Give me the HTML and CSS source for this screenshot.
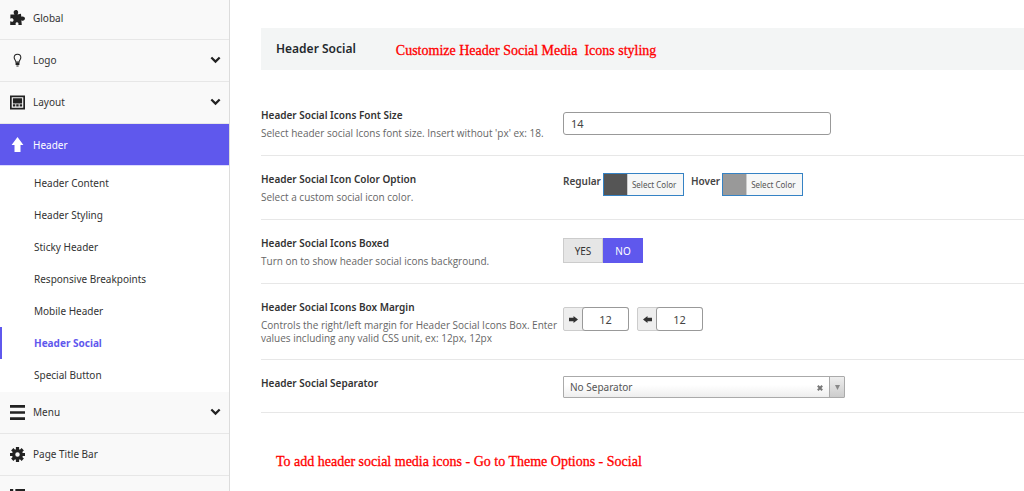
FILE: index.html
```html
<!DOCTYPE html>
<html lang="en">
<head>
<meta charset="utf-8">
<title>Theme Options - Header Social</title>
<link rel="stylesheet" href="styles.css">
</head>
<body>
<div class="app">
  <nav class="sidebar">
    <a class="item" href="#"><svg class="icon" viewBox="0 0 14 14"><path d="M.4 4.200H4.200C2.800 2.400 3.400.1 5.500 0 7.700 0 8.200 2.400 7 4.100L10.200 3.500 10.600 6.300C12 5.500 14 6.400 14 8s-2 2.600-3.400 1.500L11 14H7.800C8.200 12.400 7.800 11.400 6.500 11.400S5 12.600 5.400 14H.2V10.600C2.200 11.500 3.400 10.800 3.300 9.300 3.200 7.900 1.600 7.300.3 8.200Z"/></svg><span>Global</span></a>
    <a class="item" href="#"><svg class="icon" viewBox="0 0 14 14"><path class="line" d="M5.500 8.500C5.500 7 3.900 6 3.900 4.300a3.100 3.100 0 0 1 6.200 0C10.100 6 8.500 7 8.500 8.500Z"/><path d="M5.200 9h3.600v2.200H5.200zM6 11.600h2v1H6z"/></svg><span>Logo</span><svg class="chevron" viewBox="0 0 10 7"><path d="M1.200 1.200 5 5l3.800-3.800"/></svg></a>
    <a class="item" href="#"><svg class="icon" viewBox="0 0 14 14"><path fill-rule="evenodd" d="M0 .5h14v13H0zM1.600 2v10h10.800V2zM2.700 3.100h8.600v4.900H2.700zM2.700 8.600h2.300v2.200H2.700zM5.800 8.600h2.300v2.200H5.800zM9 8.600h2.300v2.200H9z"/></svg><span>Layout</span><svg class="chevron" viewBox="0 0 10 7"><path d="M1.200 1.200 5 5l3.800-3.800"/></svg></a>
    <a class="item active" href="#"><svg class="icon" viewBox="0 0 14 14"><path d="M7 0 12.500 7.500H9.800V14H4.200V7.500H1.500Z"/></svg><span>Header</span></a>
    <div class="submenu">
      <a class="sub" href="#">Header Content</a>
      <a class="sub" href="#">Header Styling</a>
      <a class="sub" href="#">Sticky Header</a>
      <a class="sub" href="#">Responsive Breakpoints</a>
      <a class="sub" href="#">Mobile Header</a>
      <a class="sub current" href="#">Header Social</a>
      <a class="sub" href="#">Special Button</a>
    </div>
    <a class="item" href="#"><svg class="icon" viewBox="0 0 14 14"><path d="M0 0h14v2.500H0zM0 5.750h14v2.500H0zM0 11.500h14V14H0z"/></svg><span>Menu</span><svg class="chevron" viewBox="0 0 10 7"><path d="M1.200 1.200 5 5l3.800-3.800"/></svg></a>
    <a class="item" href="#"><svg class="icon" viewBox="0 0 14 14"><circle class="gear" cx="7" cy="7" r="3.600"/><path class="teeth" d="M7 0v3M7 11v3M0 7h3M11 7h3M2.100 2.100l2 2M9.900 9.900l2 2M2.100 11.900l2-2M9.900 4.100l2-2"/></svg><span>Page Title Bar</span></a>
    <a class="item" href="#" aria-label="More"><svg class="icon" viewBox="0 0 14 14"><path d="M0 0h3v3H0zM5 0h9v3H5zM0 5.500h3v3H0zM5 5.500h9v3H5zM0 11h3v3H0zM5 11h9v3H5z"/></svg></a>
  </nav>

  <main class="main">
    <header class="titlebar">
      <h1>Header Social</h1>
      <p class="note">Customize Header Social Media&nbsp; Icons styling</p>
    </header>

    <form class="fields">
      <div class="row">
        <div class="info"><label class="name" for="size">Header Social Icons Font Size</label><p class="desc">Select header social Icons font size. Insert without 'px' ex: 18.</p></div>
        <div class="control"><input class="text" id="size" type="text" value="14"></div>
      </div>
      <div class="row">
        <div class="info"><h2 class="name">Header Social Icon Color Option</h2><p class="desc">Select a custom social icon color.</p></div>
        <div class="control colors">
          <strong class="state">Regular</strong>
          <button class="color" type="button" aria-label="Regular: Select Color"><i class="swatch dark"></i><span>Select Color</span></button>
          <strong class="state second">Hover</strong>
          <button class="color" type="button" aria-label="Hover: Select Color"><i class="swatch light"></i><span>Select Color</span></button>
        </div>
      </div>
      <div class="row">
        <div class="info"><h2 class="name">Header Social Icons Boxed</h2><p class="desc">Turn on to show header social icons background.</p></div>
        <div class="control toggle"><button class="choice" type="button" aria-pressed="false">YES</button><button class="choice on" type="button" aria-pressed="true">NO</button></div>
      </div>
      <div class="row">
        <div class="info"><h2 class="name">Header Social Icons Box Margin</h2><p class="desc">Controls the right/left margin for Header Social Icons Box. Enter values including any valid CSS unit, ex: 12px, 12px</p></div>
        <div class="control margins">
          <label class="margin"><svg class="arrow" viewBox="0 0 9 7"><path d="M0 1.700h4.500V0L9 3.500 4.500 7V5.300H0z"/></svg><input type="text" value="12" aria-label="Right margin"></label>
          <label class="margin"><svg class="arrow" viewBox="0 0 9 7"><path d="M9 1.700H4.500V0L0 3.500 4.500 7V5.300H9z"/></svg><input type="text" value="12" aria-label="Left margin"></label>
        </div>
      </div>
      <div class="row">
        <div class="info"><label class="name" for="separator">Header Social Separator</label></div>
        <div class="control"><div class="picker">
          <select id="separator"><option>No Separator</option></select>
          <svg class="clear" viewBox="0 0 6 6"><path d="m.8.800 4.400 4.400m0-4.400L.8 5.200"/></svg>
          <span class="drop"><svg viewBox="0 0 5 5"><path d="M0 0h5L2.500 5z"/></svg></span>
        </div></div>
      </div>
    </form>
    <p class="note footnote">To add header social media icons - Go to Theme Options - Social</p>
  </main>
</div>
</body>
</html>
```
FILE: styles.css
```css
* { box-sizing: border-box; }
body, h1, h2, p { margin: 0; }
body { font: 10px/14px "Noto Sans", sans-serif; color: #333; background: #fff; }
button, input, select { font-family: inherit; color: inherit; margin: 0; }
.app { display: flex; height: 100vh; overflow: hidden; }

.sidebar { flex: none; width: 230px; overflow: hidden; border-right: 1px solid #dcdcdc; }
.item { display: flex; align-items: center; gap: 8px; height: 42px; padding: 0 8px 1px 10px; background: #f9f9f9; border-bottom: 1px solid #e7e7e7; color: #333; text-decoration: none; }
.item:first-child { height: 40px; padding-bottom: 4px; }
.item.active { padding-bottom: 0; background: #5f58ed; border-color: #dcdaff; color: #fff; }
.icon { flex: none; width: 15px; height: 15px; fill: #222; }
.active .icon { fill: #fff; }
.icon .line { fill: none; stroke: #222; stroke-width: 1; }
.icon .gear { fill: none; stroke: #222; stroke-width: 3; }
.icon .teeth { stroke: #222; stroke-width: 3; }
.chevron { width: 11px; height: 8px; margin-left: auto; fill: none; stroke: #222; stroke-width: 2; }
.submenu { display: flex; flex-direction: column; padding: 1px 0; }
.sub { flex: none; padding: 9px 0 9px 32px; border-left: 2px solid transparent; color: #333; text-decoration: none; }
.sub.current { border-color: #5f58ed; color: #5f58ed; font-weight: 700; }

.main { flex: 1; min-width: 0; padding-left: 31px; overflow: hidden; }
.titlebar { display: flex; align-items: center; gap: 40px; height: 42px; margin-top: 28px; padding-left: 15px; background: #f3f5f5; }
.titlebar h1 { font-size: 12px; line-height: 20px; font-weight: 600; color: #23282d; }
.note { font: 14px/20px "Liberation Serif", serif; color: #f00; -webkit-text-stroke: 0.3px #f00; }
.titlebar .note { padding-top: 3px; }
.footnote { padding: 39px 15px 0; }

.fields { padding-top: 22px; }
.row { display: grid; grid-template-columns: 302px 1fr; align-items: start; min-height: 64px; padding-bottom: 14px; border-bottom: 1px solid #e7e7e7; }
.row:last-child { min-height: 53px; padding-bottom: 0; }
.info { padding-top: 16px; }
.name { display: block; font-size: 10px; line-height: 14px; font-weight: 600; color: #333; }
.desc { margin-top: 5px; font-family: "Open Sans", sans-serif; line-height: 13px; color: #666; }
.control { padding-top: 16px; }
.text { display: block; width: 268px; max-width: 100%; height: 23px; padding: 0 7px; border: 1px solid #999; border-radius: 3px; background: #fff; font-size: 11px; color: #444; }
.row:first-child .control { padding-top: 20px; }

.colors { display: flex; gap: 2px; }
.state { padding-top: 2px; font-weight: 600; line-height: 14px; color: #444; }
.second { margin-left: 5px; }
.color { display: flex; align-items: center; width: 81px; height: 23px; padding: 0; border: 1px solid #3582c4; background: #f6f7f7; color: #555; font-size: 8px; line-height: 21px; margin-top: 1px; }
.swatch { width: 24px; height: 21px; margin-right: 4px; border-right: 1px solid #ccc; }
.dark { background: #555; }
.light { background: #999; }

.toggle { display: flex; padding-top: 18px; }
.choice { height: 25px; min-width: 40px; padding: 0 10px; border: 1px solid #ccc; background: #e6e6e6; font-size: 10px; }
.choice.on { border-color: #5f58ed; background: #5f58ed; color: #fff; }

.margins { display: flex; gap: 8px; padding-top: 23px; }
.margin { display: flex; width: 66px; height: 24px; border: 1px solid #ccc; border-radius: 2px; background: #eee; align-items: center; }
.margin .arrow { flex: none; width: 9px; height: 7px; margin: 0 4px 0 5px; fill: #333; }
.margin input { flex: none; width: 47px; height: 24px; padding: 0; border: 1px solid #999; border-radius: 3px; font-size: 11px; text-align: center; background: #fff; color: #444; }

.picker { position: relative; width: 282px; max-width: 100%; }
.picker select { display: block; appearance: none; width: 100%; height: 22px; padding: 0 40px 0 6px; border: 1px solid #aaa; border-radius: 1px; background: linear-gradient(#fff 40%, #eee); font-size: 10px; color: #555; }
.picker .clear { position: absolute; right: 22px; top: 9px; width: 6px; height: 6px; stroke: #777; stroke-width: 2; pointer-events: none; }
.picker .drop { position: absolute; right: 1px; top: 1px; bottom: 1px; width: 15px; display: grid; place-items: center; border-left: 1px solid #aaa; background: linear-gradient(#eee, #ccc); pointer-events: none; }
.drop svg { width: 5px; height: 5px; fill: #888; }
```
